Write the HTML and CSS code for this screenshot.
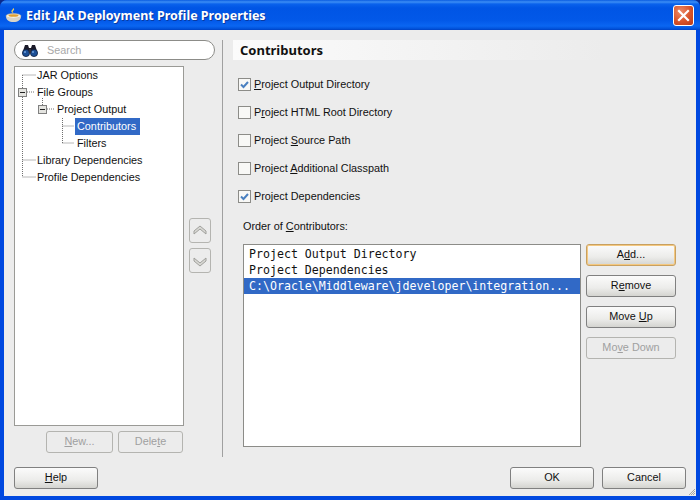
FILE: index.html
```html
<!DOCTYPE html>
<html lang="en">
<head>
<meta charset="utf-8">
<title>Edit JAR Deployment Profile Properties</title>
<link rel="stylesheet" href="styles.css">
</head>
<body>
<div class="window">
  <header class="titlebar">
    <svg class="app-icon" width="17" height="17" viewBox="0 0 17 17">
      <path d="M8 1c2 1 1 2 0 3s0 2 1 2c-3 0-3-2-2-3s1-1 1-2z" fill="#f0d060"/>
      <ellipse cx="8.5" cy="9" rx="7.5" ry="2.5" fill="#f4f0e0" stroke="#b8b0a0" stroke-width=".6"/>
      <path d="M1 9c0 4 3 6 7.500 6s7.500-2 7.500-6c-2 2.500-13 2.500-15 0z" fill="#d8d4c8"/>
      <ellipse cx="8.500" cy="8.500" rx="5" ry="1.300" fill="#e0a030"/>
    </svg>
    <span class="title">Edit JAR Deployment Profile Properties</span>
    <button class="close" aria-label="Close">
      <svg width="13" height="13" viewBox="0 0 13 13"><path d="M2 2l9 9M11 2l-9 9" stroke="#fff" stroke-width="2.200" stroke-linecap="square"/></svg>
    </button>
  </header>
  <div class="client">
    <div class="main">
      <aside class="nav">
        <div class="search">
          <svg width="16" height="14" viewBox="0 0 16 14">
            <path d="M1 8l2-6h3l1 3h2l1-3h3l2 6z" fill="#1a1a28"/>
            <circle cx="4" cy="10" r="3.600" fill="#1c4f96" stroke="#10203c" stroke-width=".8"/>
            <circle cx="12" cy="10" r="3.600" fill="#1c4f96" stroke="#10203c" stroke-width=".8"/>
            <rect x="6.800" y="6" width="2.400" height="4" fill="#30303c"/>
            <circle cx="3" cy="9" r="1" fill="#6fa0dc"/><circle cx="11" cy="9" r="1" fill="#6fa0dc"/>
          </svg>
          <span>Search</span>
        </div>
        <div class="tree">
          <svg class="tree-lines" width="80" height="125" viewBox="0 0 80 125">
            <g fill="none" stroke="#707070" stroke-dasharray="1 1">
              <path d="M8.500 9v102M8.500 9h13M13 26h8M8.500 94h13M8.500 111h13"/>
              <path d="M28.500 32v7M33 43h8"/>
              <path d="M48.500 52v25M48.500 60h12M48.500 77h12"/>
            </g>
            <g fill="#e4e4e0" stroke="#808080">
              <rect x="4.500" y="22.500" width="8" height="8"/>
              <rect x="24.500" y="39.500" width="8" height="8"/>
            </g>
            <path d="M6 26.500h5M26 43.500h5" stroke="#222"/>
          </svg>
          <div class="node lvl0">JAR Options</div>
          <div class="node lvl0">File Groups</div>
          <div class="node lvl1">Project Output</div>
          <div class="node lvl2"><span class="selected">Contributors</span></div>
          <div class="node lvl2">Filters</div>
          <div class="node lvl0">Library Dependencies</div>
          <div class="node lvl0">Profile Dependencies</div>
        </div>
        <div class="nav-actions">
          <button class="btn disabled new"><u>N</u>ew...</button>
          <button class="btn disabled delete">Dele<u>t</u>e</button>
        </div>
      </aside>
      <div class="mover">
        <button class="move-btn" aria-label="Move up">
          <svg width="16" height="14" viewBox="0 0 16 14"><path d="M2 7l6-5 6 5v3l-6-5-6 5z" fill="#d8d8d4" stroke="#a0a09c"/></svg>
        </button>
        <button class="move-btn" aria-label="Move down">
          <svg width="16" height="14" viewBox="0 0 16 14"><path d="M2 4l6 5 6-5v3l-6 5-6-5z" fill="#d8d8d4" stroke="#a0a09c"/></svg>
        </button>
      </div>
      <section class="panel">
        <h2 class="panel-title">Contributors</h2>
        <div class="panel-body">
          <label class="check"><span class="box on"><svg width="11" height="11" viewBox="0 0 11 11"><path d="M2 5.500l2.500 2.500 4.500-5" fill="none" stroke="#4a80c0" stroke-width="2"/></svg></span><span><u>P</u>roject Output Directory</span></label>
          <label class="check"><span class="box"></span><span>P<u>r</u>oject HTML Root Directory</span></label>
          <label class="check"><span class="box"></span><span>Project <u>S</u>ource Path</span></label>
          <label class="check"><span class="box"></span><span>Project <u>A</u>dditional Classpath</span></label>
          <label class="check"><span class="box on"><svg width="11" height="11" viewBox="0 0 11 11"><path d="M2 5.500l2.500 2.500 4.500-5" fill="none" stroke="#4a80c0" stroke-width="2"/></svg></span><span>Project Dependencies</span></label>
          <div class="order-label">Order of <u>C</u>ontributors:</div>
          <div class="order">
            <div class="list">
              <div class="item">Project Output Directory</div>
              <div class="item">Project Dependencies</div>
              <div class="item selected">C:\Oracle\Middleware\jdeveloper\integration...</div>
            </div>
            <div class="list-actions">
              <button class="btn focus">A<u>d</u>d...</button>
              <button class="btn">R<u>e</u>move</button>
              <button class="btn">Move <u>U</u>p</button>
              <button class="btn disabled">Mo<u>v</u>e Down</button>
            </div>
          </div>
        </div>
      </section>
    </div>
    <footer class="footer">
      <button class="btn wide"><u>H</u>elp</button>
      <div class="footer-right">
        <button class="btn wide">OK</button>
        <button class="btn wide">Cancel</button>
      </div>
    </footer>
    <svg class="grip" width="8" height="8" viewBox="0 0 8 8"><path d="M7 1L1 7M7 3L3 7M7 5L5 7" stroke="#a8a8a0"/></svg>
  </div>
</div>
</body>
</html>
```
FILE: styles.css
```css
* { box-sizing: border-box; }
html, body { margin: 0; padding: 0; background: #0a2a8c; }
body { width: 700px; height: 500px; overflow: hidden; font: 10.850px "Liberation Sans", "Noto Sans", sans-serif; color: #111; }
button { font: inherit; color: inherit; padding: 0 0 2px; margin: 0; }
u { text-underline-offset: 1px; }

.window { width: 700px; height: 500px; display: flex; flex-direction: column; background: #0048e0; border-radius: 7px 7px 0 0; overflow: hidden; }
.titlebar { height: 30px; flex: none; display: flex; align-items: center; padding: 0 6px 0 5px;
  background: linear-gradient(#0a5ce0 0, #3c8ef5 2px, #0a62ec 4px, #0055e5 8px, #0258e8 20px, #0a66f2 26px, #0050d8 29px, #003fc0 30px); }
.app-icon { flex: none; }
.title { margin-left: 4px; color: #fff; font: bold 12.500px "Noto Sans", sans-serif; text-shadow: 1px 1px 0 #0a3aa0; flex: 1; white-space: nowrap; }
.close { width: 21px; height: 21px; padding: 0; border: 1px solid #fff; border-radius: 3px; background: radial-gradient(circle at 35% 30%, #ec8a68, #d8532a 55%, #b83a18); display: flex; align-items: center; justify-content: center; }

.client { flex: 1; min-height: 0; margin: 0 4px 4px; background: #ececec; display: flex; flex-direction: column; position: relative; }
.main { height: 427px; flex: none; padding-top: 10px; display: flex; }
.nav { width: 170px; margin-left: 10px; flex: none; display: flex; flex-direction: column; }
.search { width: 201px; height: 20px; flex: none; background: #fff; border: 1px solid #8c8c88; border-radius: 10px; display: flex; align-items: center; padding-left: 7px; gap: 9px; color: #a8a8a8; }
.tree { height: 360px; flex: none; margin-top: 6px; background: #fff; border: 1px solid #9a9a96; position: relative; }
.tree-lines { position: absolute; left: -1px; top: -1px; }
.node { height: 17px; line-height: 17px; white-space: nowrap; position: relative; }
.lvl0 { padding-left: 22px; }
.lvl1 { padding-left: 42px; }
.lvl2 { padding-left: 62px; }
.selected { background: #3169c6; color: #fff; }
.lvl2 .selected { display: inline-block; margin-left: -2px; padding: 0 2px; min-width: 65px; }
.nav-actions { margin-top: 5px; display: flex; justify-content: flex-end; gap: 5px; padding-right: 1px; }
.new { width: 67px; }
.delete { width: 65px; }

.btn { height: 22px; border: 1px solid #808080; border-radius: 3px; background: linear-gradient(#fbfbfb, #ececea 60%, #d4d4d0); display: block; white-space: nowrap; }
.btn.disabled { background: #ececec; border-color: #b4b4b0; color: #a0a0a0; }
.btn.focus { border-color: #c8a060; box-shadow: inset 0 0 0 1px #f4c880; }
.btn.wide { width: 84px; }

.mover { width: 38px; flex: none; padding-top: 178px; padding-left: 5px; display: flex; flex-direction: column; gap: 5px; }
.move-btn { width: 22px; height: 25px; padding: 0; border: 1px solid #b4b4b0; border-radius: 3px; background: #ececec; display: flex; align-items: center; justify-content: center; }

.panel { flex: 1; min-width: 0; border-left: 1px solid #a0a0a0; padding-left: 10px; display: flex; flex-direction: column; }
.panel-title { margin: 0; height: 20px; font: bold 13px/20px "Noto Sans", sans-serif; padding-left: 7px; background: linear-gradient(90deg, #fbfbfb, #ececec 80%); flex: none; }
.panel-body { padding: 10px 0 0 5px; flex: 1; min-height: 0; display: flex; flex-direction: column; }
.check { height: 28px; flex: none; display: flex; align-items: center; gap: 3px; }
.box { width: 13px; height: 13px; border: 1px solid #8c8c88; background: #f8f8f6; display: flex; align-items: center; justify-content: center; }
.order-label { margin: 8px 0 0 5px; height: 17px; line-height: 17px; }
.order { margin: 9px 0 0 5px; display: flex; gap: 5px; align-items: flex-start; }
.list { width: 338px; height: 203px; background: #fff; border: 1px solid #8c8c88; padding-top: 1px; font: 11.600px "DejaVu Sans Mono", monospace; }
.item { height: 16px; line-height: 16px; padding-left: 5px; white-space: nowrap; }
.list-actions { width: 90px; display: flex; flex-direction: column; gap: 9px; }
.list-actions .btn { width: 90px; }

.footer { flex: none; padding: 10px 10px 0; display: flex; justify-content: space-between; }
.footer-right { display: flex; gap: 8px; }
.grip { position: absolute; right: 0; bottom: 0; }
```
